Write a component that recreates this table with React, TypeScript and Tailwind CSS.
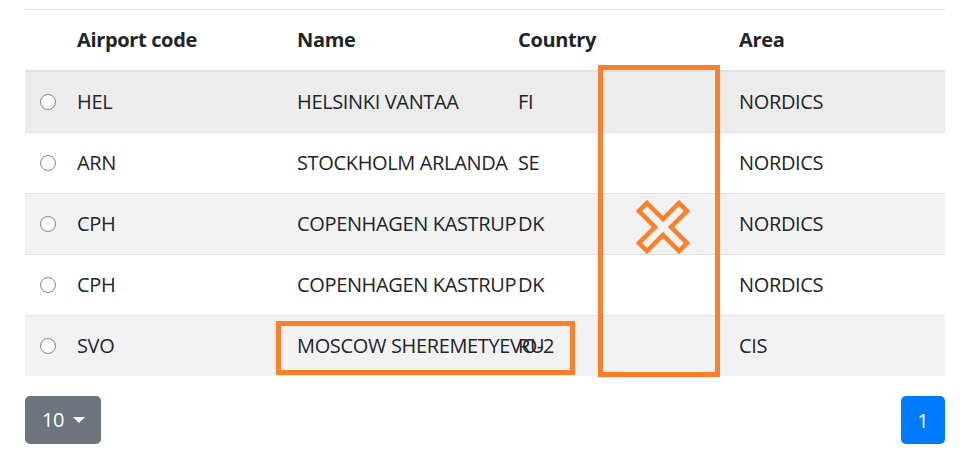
import React from "react";

const rows = [
  { code: "HEL", name: "HELSINKI VANTAA", country: "FI", area: "NORDICS", bg: "bg-[#ececec]" },
  { code: "ARN", name: "STOCKHOLM ARLANDA", country: "SE", area: "NORDICS", bg: "bg-white" },
  { code: "CPH", name: "COPENHAGEN KASTRUP", country: "DK", area: "NORDICS", bg: "bg-[#f2f2f2]" },
  { code: "CPH", name: "COPENHAGEN KASTRUP", country: "DK", area: "NORDICS", bg: "bg-white" },
  { code: "SVO", name: "MOSCOW SHEREMETYEVO-2", country: "RU", area: "CIS", bg: "bg-[#f2f2f2]" },
];

export default function App() {
  return (
    <div
      className="relative w-[979px] h-[464px] bg-white text-[#212529] overflow-hidden"
      style={{ fontFamily: '"Open Sans", "Noto Sans", sans-serif' }}
    >
      <div className="pt-[9px] pl-[25px] w-[945px]">
        <table className="w-[920px] table-fixed border-collapse text-[20px] leading-[30px] tracking-[-0.35px]">
          <colgroup>
            <col className="w-[37px]" />
            <col className="w-[220px]" />
            <col className="w-[221px]" />
            <col className="w-[221px]" />
            <col className="w-[221px]" />
          </colgroup>
          <thead>
            <tr>
              <th className="border-t border-b-2 border-[#dee2e6] px-[15px] py-[15px]"></th>
              <th className="border-t border-b-2 border-[#dee2e6] px-[15px] py-[15px] text-left font-bold whitespace-nowrap">Airport code</th>
              <th className="border-t border-b-2 border-[#dee2e6] px-[15px] py-[15px] text-left font-bold">Name</th>
              <th className="border-t border-b-2 border-[#dee2e6] px-[15px] py-[15px] text-left font-bold">Country</th>
              <th className="border-t border-b-2 border-[#dee2e6] px-[15px] py-[15px] text-left font-bold">Area</th>
            </tr>
          </thead>
          <tbody>
            {rows.map((r, i) => (
              <tr key={i} className={r.bg}>
                <td className="border-t border-[#dee2e6] pl-[15px] pr-0 py-[15px]">
                  <span className="block w-[16px] h-[16px] rounded-full border border-[#858585] bg-white"></span>
                </td>
                <td className="border-t border-[#dee2e6] px-[15px] py-[15px] whitespace-nowrap">{r.code}</td>
                <td className="border-t border-[#dee2e6] px-[15px] py-[15px] whitespace-nowrap">{r.name}</td>
                <td className="border-t border-[#dee2e6] px-[15px] py-[15px] whitespace-nowrap">{r.country}</td>
                <td className="border-t border-[#dee2e6] px-[15px] py-[15px] whitespace-nowrap">{r.area}</td>
              </tr>
            ))}
          </tbody>
        </table>
        <div className="mt-[20px] flex items-center justify-between">
          <button className="flex items-center h-[48px] pl-[17px] pr-[16px] rounded-[5px] bg-[#6c757d] text-white text-[20px] leading-[30px] tracking-[-0.5px]">
            <span>10</span>
            <span className="ml-[9px] w-0 h-0 border-l-[6px] border-r-[6px] border-t-[6px] border-l-transparent border-r-transparent border-t-white"></span>
          </button>
          <button className="flex items-center justify-center w-[44px] h-[48px] rounded-[5px] bg-[#007bff] text-white text-[20px] leading-[25px]">
            1
          </button>
        </div>
      </div>

      {/* annotation overlays */}
      <div className="absolute left-[598px] top-[65px] w-[122px] h-[312px] border-[5px] border-[#fe7f2a]"></div>
      <div className="absolute left-[276px] top-[321px] w-[299px] h-[54px] border-[5px] border-[#fe7f2a]"></div>
      <svg className="absolute left-[636px] top-[200px]" width="54" height="54" viewBox="0 0 54 54">
        <polygon
          points="11,3 27,19 43,3 51,11 35,27 51,43 43,51 27,35 11,51 3,43 19,27 3,11"
          fill="none"
          stroke="#fe7f2a"
          strokeWidth="4.5"
          strokeLinejoin="miter"
        />
      </svg>
    </div>
  );
}
